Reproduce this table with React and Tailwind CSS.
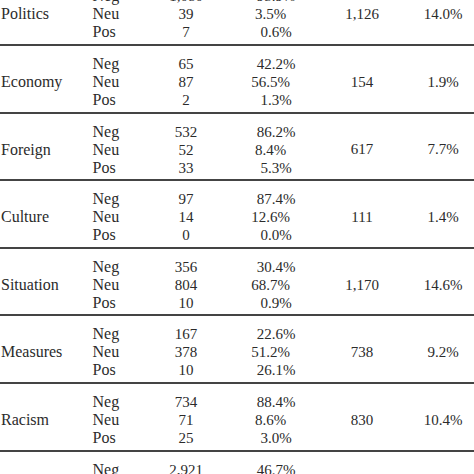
const groups = [
  {
    name: "Politics",
    rows: [["Neg", "1,080", "95.9%"], ["Neu", "39", "3.5%"], ["Pos", "7", "0.6%"]],
    total: "1,126",
    share: "14.0%",
  },
  {
    name: "Economy",
    rows: [["Neg", "65", "42.2%"], ["Neu", "87", "56.5%"], ["Pos", "2", "1.3%"]],
    total: "154",
    share: "1.9%",
  },
  {
    name: "Foreign",
    rows: [["Neg", "532", "86.2%"], ["Neu", "52", "8.4%"], ["Pos", "33", "5.3%"]],
    total: "617",
    share: "7.7%",
  },
  {
    name: "Culture",
    rows: [["Neg", "97", "87.4%"], ["Neu", "14", "12.6%"], ["Pos", "0", "0.0%"]],
    total: "111",
    share: "1.4%",
  },
  {
    name: "Situation",
    rows: [["Neg", "356", "30.4%"], ["Neu", "804", "68.7%"], ["Pos", "10", "0.9%"]],
    total: "1,170",
    share: "14.6%",
  },
  {
    name: "Measures",
    rows: [["Neg", "167", "22.6%"], ["Neu", "378", "51.2%"], ["Pos", "10", "26.1%"]],
    total: "738",
    share: "9.2%",
  },
  {
    name: "Racism",
    rows: [["Neg", "734", "88.4%"], ["Neu", "71", "8.6%"], ["Pos", "25", "3.0%"]],
    total: "830",
    share: "10.4%",
  },
  {
    name: "Total",
    rows: [["Neg", "2,921", "46.7%"], ["Neu", "3,144", "50.3%"], ["Pos", "190", "3.0%"]],
    total: "6,255",
    share: "100.0%",
  },
];

const Group = ({ g, first }) => (
  <div
    className={`grid grid-cols-[92px_54px_80px_100px_72px_76px] h-[67.6px] pt-[9px] border-b-2 border-[#444] ${
      first ? "mt-[-21.6px]" : ""
    }`}
  >
    <div className="h-[54px] flex items-center pl-px text-[16px]">{g.name}</div>
    <div className="flex flex-col text-[16px]">
      {g.rows.map((r) => (
        <div key={r[0]} className="h-[18px] leading-[18px] pl-[0.5px]">
          {r[0]}
        </div>
      ))}
    </div>
    <div className="flex flex-col text-[15px]">
      {g.rows.map((r) => (
        <div key={r[0]} className="h-[18px] leading-[18px] text-center">
          {r[1]}
        </div>
      ))}
    </div>
    <div className="flex flex-col text-[15px]">
      {g.rows.map((r) => (
        <div
          key={r[0]}
          className={`h-[18px] leading-[18px] text-center ${r[0] === "Neu" ? "pr-[11px]" : ""}`}
        >
          {r[2]}
        </div>
      ))}
    </div>
    <div className="h-[54px] flex items-center justify-center text-[15px]">{g.total}</div>
    <div className="h-[54px] flex items-center justify-center pl-[14px] pr-0 text-[15px]">
      <span className="w-[62px] text-center">{g.share}</span>
    </div>
  </div>
);

export default function App() {
  return (
    <div
      className="w-[474px] h-[474px] overflow-hidden bg-white text-[#2b2b2b]"
      style={{ fontFamily: '"Liberation Serif", "DejaVu Serif", serif' }}
    >
      {groups.map((g, i) => (
        <Group key={g.name} g={g} first={i === 0} />
      ))}
    </div>
  );
}
